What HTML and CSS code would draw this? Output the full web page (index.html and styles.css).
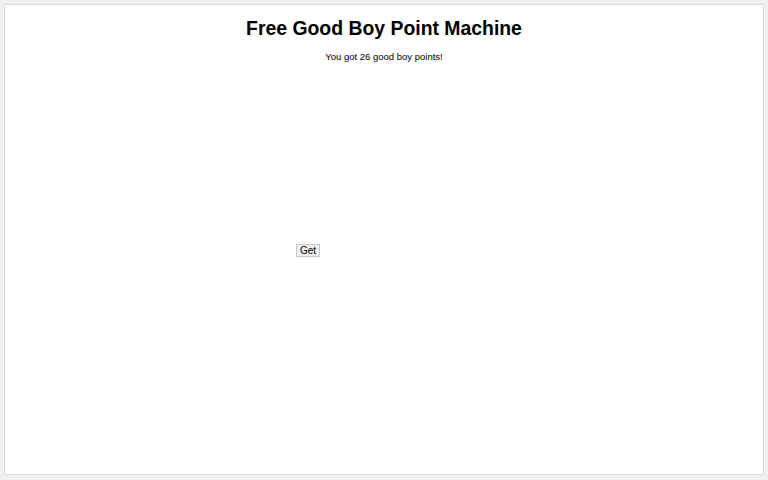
FILE: index.html
```html
<!DOCTYPE html>
<html lang="en">
<head>
    <meta charset="UTF-8">
    <title>Free Good Boy Point Machine</title>
    <link rel="stylesheet" href="styles.css">
</head>
<body>
    <div class="page">
        <h1>Free Good Boy Point Machine</h1>
        <p class="count">You got <span id="points">26</span> good boy points!</p>
        <div class="machine">
            <button id="getBtn" class="get-btn">Get</button>
        </div>
    </div>
    <script>
        let points = 26;
        document.getElementById('getBtn').addEventListener('click', function() {
            points++;
            document.getElementById('points').textContent = points;
        });
    </script>
</body>
</html>
```

FILE: styles.css
```css
html, body {
    height: 100%;
}
body {
    font-family: 'Liberation Sans', Arial, sans-serif;
    background-color: #f2f2f2;
    color: #000;
    margin: 0;
    padding: 4px 4px 5px;
    box-sizing: border-box;
}
.page {
    background-color: #fff;
    border: 1px solid #dcdcdc;
    height: 100%;
    box-sizing: border-box;
    text-align: center;
}
h1 {
    margin: 0;
    padding-top: 11px;
    font-size: 19.4px;
    line-height: 24px;
}
.count {
    margin: 11px 0 0;
    font-size: 9.5px;
    line-height: 12px;
}
.machine {
    padding-top: 177px;
    padding-left: 291px;
    text-align: left;
}
.get-btn {
    font-family: 'Liberation Sans', Arial, sans-serif;
    font-size: 10px;
    line-height: 11px;
    padding: 0 3px;
    background-color: #efefef;
    border: 1px solid #c8c8c8;
    border-radius: 0;
    color: #000;
}
```
